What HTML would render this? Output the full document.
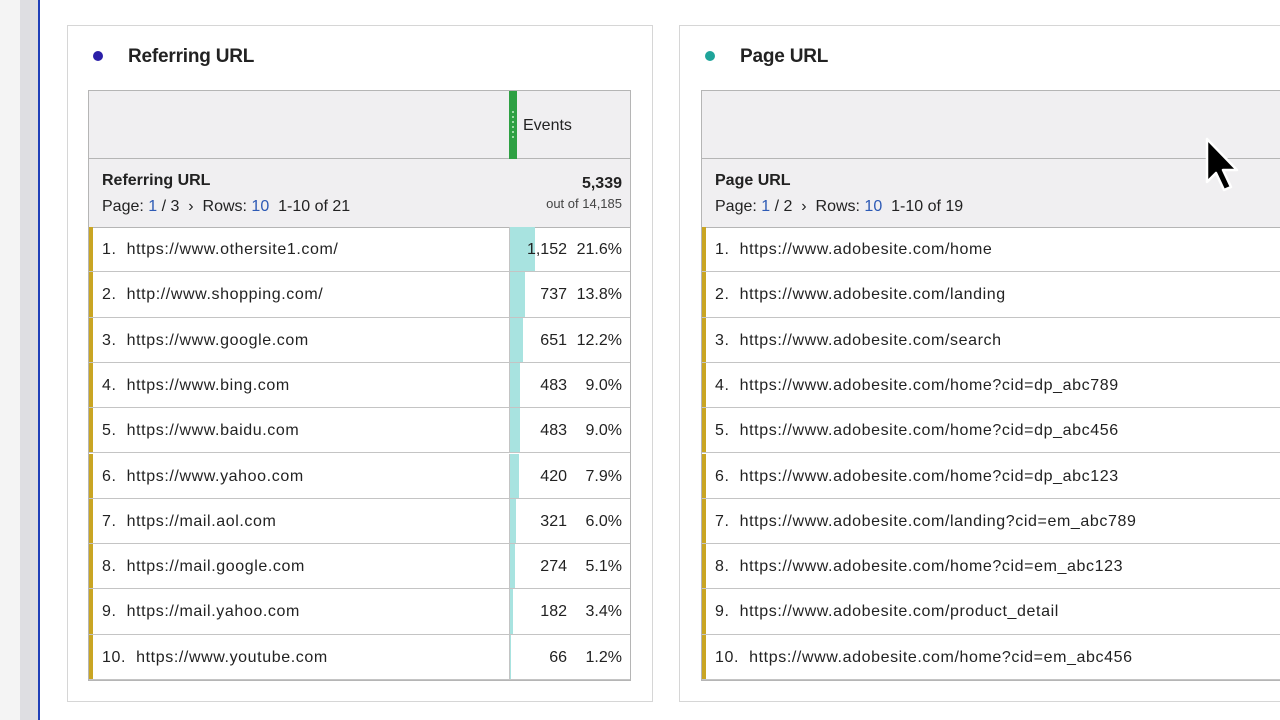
<!DOCTYPE html>
<html><head><meta charset="utf-8"><style>
*{margin:0;padding:0;box-sizing:border-box}
body{width:1280px;height:720px;overflow:hidden;background:#fff;font-family:"Liberation Sans",sans-serif;color:#222;position:relative}
.a{position:absolute}
.panel{position:absolute;top:25px;height:677px;border:1px solid #d6d6d6;background:#fff}
.title{position:absolute;top:46px;font-size:19px;font-weight:bold;letter-spacing:-0.2px}
.dot{position:absolute;top:51px;width:10px;height:10px;border-radius:50%}
.tbl{position:absolute;top:90px;border:1px solid #b5b5b5;background:#fff}
.hdr{position:absolute;left:0;right:0;top:0;height:68px;background:#f0eff1;border-bottom:1px solid #b5b5b5}
.sum{position:absolute;left:0;right:0;top:68px;height:69px;background:#f0eff1;border-bottom:1px solid #b5b5b5}
.row{position:absolute;left:0;right:0;height:45.3px;border-bottom:1px solid #c4c4c4;font-size:16px;line-height:45px;white-space:nowrap}
.u{letter-spacing:0.6px}
.gold{position:absolute;left:0;top:0;bottom:0;width:4px;background:#c9a523}
.blue{color:#2d5ab5}
</style></head><body>
<div class="a" style="left:0;top:0;width:20px;height:720px;background:#f4f4f4"></div>
<div class="a" style="left:20px;top:0;width:18px;height:720px;background:#dedee2"></div>
<div class="a" style="left:38px;top:0;width:2px;height:720px;background:#1f3fb8"></div>

<div class="panel" style="left:67px;width:586px"></div>
<div class="dot" style="left:93px;background:#2b1fa8"></div>
<div class="title" style="left:128px">Referring URL</div>
<div class="tbl" style="left:88px;top:90px;width:543px;height:591px">
 <div class="hdr"></div>
 <div class="a" style="left:420px;top:0;width:8px;height:68px;background:#2ea043"></div>
 <div class="a" style="left:423px;top:20px;width:2px;height:28px;background:repeating-linear-gradient(#9fdca8 0 2px,transparent 2px 5px)"></div>
 <div class="a" style="left:434px;top:26px;font-size:16px">Events</div>
 <div class="sum"></div>
 <div class="a" style="left:13px;top:81px;font-size:16px;font-weight:bold">Referring URL</div>
 <div class="a" style="left:13px;top:107px;font-size:16px;white-space:nowrap">Page: <span class="blue">1</span> / 3 &nbsp;› &nbsp;Rows: <span class="blue">10</span> &nbsp;1-10 of 21</div>
 <div class="a" style="right:8px;top:84px;font-size:16px;font-weight:bold">5,339</div>
 <div class="a" style="right:8px;top:105px;font-size:13px;color:#444">out of 14,185</div>
</div>

<div class="panel" style="left:679px;width:620px"></div>
<div class="dot" style="left:705px;background:#1fa49a"></div>
<div class="title" style="left:740px">Page URL</div>
<div class="tbl" style="left:701px;top:90px;width:600px;height:591px;border-right:none">
 <div class="hdr"></div>
 <div class="sum"></div>
 <div class="a" style="left:13px;top:81px;font-size:16px;font-weight:bold">Page URL</div>
 <div class="a" style="left:13px;top:107px;font-size:16px;white-space:nowrap">Page: <span class="blue">1</span> / 2 &nbsp;› &nbsp;Rows: <span class="blue">10</span> &nbsp;1-10 of 19</div>
</div>

<div id="rows"></div>
<svg class="a" style="left:1202px;top:136px" width="44" height="60" viewBox="0 0 44 60"><path d="M5 3 L5 46 L14 37 L22 54 L29 51 L21 34 L35 34 Z" fill="#000" stroke="#fff" stroke-width="2.5" stroke-linejoin="round"/></svg>

<script>
var L=[["https://www.othersite1.com/","1,152","21.6%",26],["http://www.shopping.com/","737","13.8%",16],["https://www.google.com","651","12.2%",14],["https://www.bing.com","483","9.0%",11],["https://www.baidu.com","483","9.0%",11],["https://www.yahoo.com","420","7.9%",10],["https://mail.aol.com","321","6.0%",7],["https://mail.google.com","274","5.1%",6],["https://mail.yahoo.com","182","3.4%",4],["https://www.youtube.com","66","1.2%",2]];
var R=["https://www.adobesite.com/home","https://www.adobesite.com/landing","https://www.adobesite.com/search","https://www.adobesite.com/home?cid=dp_abc789","https://www.adobesite.com/home?cid=dp_abc456","https://www.adobesite.com/home?cid=dp_abc123","https://www.adobesite.com/landing?cid=em_abc789","https://www.adobesite.com/home?cid=em_abc123","https://www.adobesite.com/product_detail","https://www.adobesite.com/home?cid=em_abc456"];
var h="";
for(var i=0;i<10;i++){var t=227+i*45.3;
h+='<div class="row" style="position:absolute;left:89px;width:541px;top:'+t+'px"><div class="gold"></div><span class="u" style="position:absolute;left:13px">'+(i+1)+'. &nbsp;'+L[i][0]+'</span><div class="a" style="left:420px;top:0;bottom:0;width:'+L[i][3]+'px;background:#a8e3e0"></div><div class="a" style="left:420px;top:0;bottom:0;width:1px;background:#c4c4c4"></div><span style="position:absolute;right:63px">'+L[i][1]+'</span><span style="position:absolute;right:8px">'+L[i][2]+'</span></div>';
h+='<div class="row" style="position:absolute;left:702px;width:578px;top:'+t+'px"><div class="gold"></div><span class="u" style="position:absolute;left:13px">'+(i+1)+'. &nbsp;'+R[i]+'</span></div>';}
document.getElementById("rows").innerHTML=h;
</script>
</body></html>
